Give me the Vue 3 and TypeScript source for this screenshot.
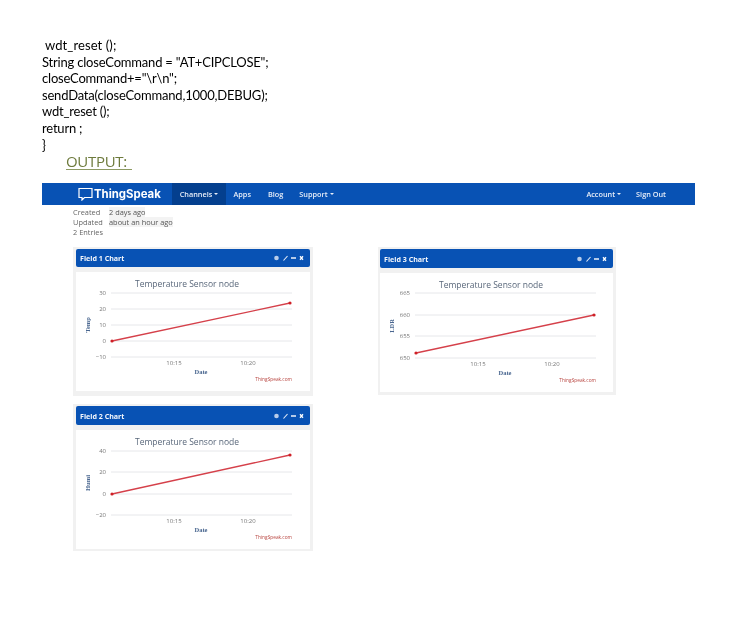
<script setup lang="ts">
interface Tick { label: string; y: number }
interface Chart {
  name: string
  axis: string
  ticks: Tick[]
  line: [number, number, number, number]
  area: string
}
const code: string[] = [
  'String closeCommand = "AT+CIPCLOSE";',
  'closeCommand+="\\r\\n";',
  'sendData(closeCommand,1000,DEBUG);',
  'wdt_reset ();',
  'return ;',
  '}',
]
const charts: Chart[] = [
  {
    name: 'Field 1 Chart', axis: 'Temp', area: 'a',
    ticks: [{ label: '30', y: 21 }, { label: '20', y: 37 }, { label: '10', y: 53 }, { label: '0', y: 69 }, { label: '−10', y: 85 }],
    line: [36, 69, 214, 31],
  },
  {
    name: 'Field 3 Chart', axis: 'LDR', area: 'c',
    ticks: [{ label: '665', y: 20 }, { label: '660', y: 42 }, { label: '655', y: 63 }, { label: '650', y: 85 }],
    line: [36, 80, 214, 42],
  },
  {
    name: 'Field 2 Chart', axis: 'Humi', area: 'b',
    ticks: [{ label: '40', y: 21 }, { label: '20', y: 42 }, { label: '0', y: 64 }, { label: '−20', y: 85 }],
    line: [36, 64, 214, 25],
  },
]
</script>

<template>
  <div class="page">
    <div class="code">
      <div class="first">wdt_reset ();</div>
      <div v-for="l in code" :key="l">{{ l }}</div>
    </div>
    <div class="output">OUTPUT:</div>

    <nav class="nav">
      <div class="brand">
        <svg class="logo" width="15" height="14" viewBox="0 0 15 14">
          <path d="M1 1.500H14V10.500H6.500L4 13V10.500H1Z" fill="none" stroke="#fff" stroke-width="1.200" />
        </svg>
        <span>ThingSpeak</span>
      </div>
      <a class="item active">Channels <i class="caret"></i></a>
      <a class="item apps">Apps</a>
      <a class="item blog">Blog</a>
      <a class="item">Support <i class="caret"></i></a>
      <span class="spacer"></span>
      <a class="item">Account <i class="caret"></i></a>
      <a class="item last">Sign Out</a>
    </nav>

    <div class="meta">
      <div><span class="key">Created</span><span class="val">2 days ago</span></div>
      <div><span class="key">Updated</span><span class="val">about an hour ago</span></div>
      <div>2 Entries</div>
    </div>

    <div class="grid">
      <section v-for="c in charts" :key="c.name" class="card" :class="c.area">
        <header class="head">
          <span>{{ c.name }}</span>
          <svg width="31" height="8" viewBox="0 0 31 8">
            <circle cx="3.500" cy="4" r="2.300" fill="#b9cdea" />
            <path d="M10.500 6.500L14.500 2" stroke="#e6edf8" stroke-width="1.100" />
            <path d="M18 4H23" stroke="#fff" stroke-width="1.400" />
            <path d="M27 2.300L30 5.700M30 2.300L27 5.700" stroke="#fff" stroke-width="1.300" />
          </svg>
        </header>
        <div class="body">
          <svg class="plot" viewBox="0 0 233 119" width="233" height="119">
            <text x="111" y="15" class="title" text-anchor="middle">Temperature Sensor node</text>
            <g v-for="t in c.ticks" :key="t.label">
              <line x1="35" x2="216" :y1="t.y" :y2="t.y" class="gridline" />
              <text x="30" :y="t.y + 2" class="tick" text-anchor="end">{{ t.label }}</text>
            </g>
            <line :x1="c.line[0]" :y1="c.line[1]" :x2="c.line[2]" :y2="c.line[3]" class="series" />
            <circle :cx="c.line[0]" :cy="c.line[1]" r="1.600" fill="#cf2027" />
            <circle :cx="c.line[2]" :cy="c.line[3]" r="1.600" fill="#cf2027" />
            <text x="98" y="92.500" class="tick" text-anchor="middle">10:15</text>
            <text x="172" y="92.500" class="tick" text-anchor="middle">10:20</text>
            <text x="125" y="101.500" class="axis" text-anchor="middle">Date</text>
            <text transform="translate(14 53) rotate(-90)" class="axis" text-anchor="middle">{{ c.axis }}</text>
            <text x="216" y="109" class="credit" text-anchor="end">ThingSpeak.com</text>
          </svg>
        </div>
      </section>
    </div>
  </div>
</template>

<style scoped>
.page {
  width: 732px;
  height: 618px;
  box-sizing: border-box;
  padding-top: 37px;
  overflow: hidden;
  background: #fff;
  color: #111;
  font-family: Lato, "Open Sans", sans-serif;
  filter: blur(0.45px);
}
.code {
  margin-left: 42px;
  font-size: 13px;
  letter-spacing: -0.2px;
  line-height: 16.600px;
  color: #000;
}
.first {
  padding-left: 3px;
  letter-spacing: 0.1px;
}
.output {
  margin: 1px 0 0 66px;
  width: 66px;
  height: 16px;
  font-family: "Open Sans", sans-serif;
  font-size: 15px;
  line-height: 15px;
  letter-spacing: -0.300px;
  color: #6d7a3c;
  border-bottom: 1.500px solid #8d9a63;
  box-sizing: border-box;
  white-space: nowrap;
}
.nav {
  display: flex;
  align-items: stretch;
  height: 22px;
  margin: 13px 37px 0 42px;
  padding-left: 36px;
  background: #0852b4;
  color: #e8eef8;
  font-family: "Open Sans", sans-serif;
  font-size: 7.300px;
  font-weight: 600;
}
.brand {
  display: flex;
  align-items: center;
  gap: 1px;
  width: 94px;
  color: #fff;
  font-family: Inter, sans-serif;
  font-size: 11.400px;
  font-weight: 700;
}
.item {
  display: flex;
  align-items: center;
  gap: 2px;
  padding: 0 7.500px;
  white-space: nowrap;
}
.item.active {
  padding: 0 7px;
  width: 54px;
  box-sizing: border-box;
  justify-content: center;
  background: #043f8e;
}
.item.blog {
  margin: 0 1px;
}
.item.apps {
  margin-right: 1px;
}
.item.last {
  padding-right: 29px;
}
.caret {
  display: inline-block;
  border-left: 2px solid transparent;
  border-right: 2px solid transparent;
  border-top: 2px solid currentColor;
}
.spacer {
  flex: 1;
}
.meta {
  margin: 2px 0 0 73px;
  font-family: "Open Sans", sans-serif;
  font-size: 7.400px;
  line-height: 10px;
  color: #666;
}
.key {
  display: inline-block;
  width: 36px;
}
.val {
  background: #f3f3f3;
  color: #555;
}
.grid {
  display: grid;
  grid-template-columns: 240px 238px;
  grid-template-areas: "a c" "b .";
  align-items: start;
  column-gap: 65px;
  row-gap: 8px;
  margin: 10px 0 0 73px;
}
.a { grid-area: a; }
.b { grid-area: b; }
.c { grid-area: c; }
.card {
  display: flex;
  flex-direction: column;
  gap: 5px;
  padding: 2px 3px 5px;
  background: #f1f1f1;
  box-sizing: border-box;
}
.card.b {
  padding-bottom: 2px;
}
.card.b .head,
.card.c .head {
  height: 19px;
}
.card.c {
  padding-left: 2px;
  padding-bottom: 3px;
}
.head {
  display: flex;
  align-items: center;
  justify-content: space-between;
  height: 18px;
  padding: 0 6px 0 4px;
  border-radius: 2px;
  background: #0852b4;
  color: #f4f7fc;
  font-family: "Open Sans", sans-serif;
  font-size: 7.100px;
  font-weight: 700;
}
.body {
  height: 119px;
  overflow: hidden;
  background: #fff;
}
.plot {
  display: block;
}
.title {
  font-family: "Open Sans", sans-serif;
  font-size: 8.500px;
  fill: #59677a;
}
.gridline {
  stroke: #dfe1e4;
  stroke-width: 0.800;
}
.tick {
  font-family: "Open Sans", sans-serif;
  font-size: 6px;
  fill: #777;
}
.axis {
  font-family: "Liberation Serif", serif;
  font-size: 6.500px;
  font-weight: 700;
  fill: #4a6790;
}
.credit {
  font-family: "Open Sans", sans-serif;
  font-size: 4.800px;
  fill: #b8443f;
}
.series {
  stroke: #d5404a;
  stroke-width: 1.300;
}
</style>
